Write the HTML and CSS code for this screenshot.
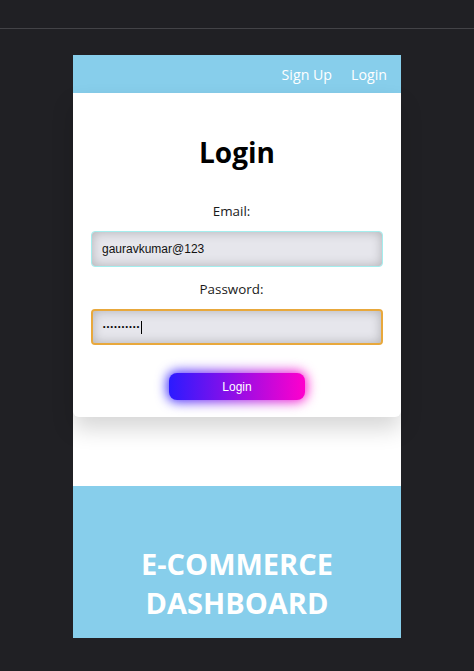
FILE: index.html
```html
<!DOCTYPE html>
<html lang="en">
<head>
<meta charset="utf-8">
<title>Login</title>
<link rel="stylesheet" href="styles.css">
</head>
<body>
<div class="topbar"></div>
<div class="panel">
  <nav class="nav">
    <a href="#" class="nav-link">Sign Up</a>
    <a href="#" class="nav-link">Login</a>
  </nav>
  <form class="card">
    <h1 class="title">Login</h1>
    <label class="label" for="email">Email:</label>
    <input id="email" class="field field-email" type="text" value="gauravkumar@123">
    <label class="label label-pass" for="pass">Password:</label>
    <div id="pass" class="field field-pass"><span class="dots">••••••••••</span><span class="caret"></span></div>
    <button type="button" class="btn">Login</button>
  </form>
  <div class="spacer"></div>
  <footer class="footer">
    <h2 class="footer-title">E-COMMERCE<br>DASHBOARD</h2>
  </footer>
</div>
</body>
</html>
```

FILE: styles.css
```css
* { box-sizing: border-box; }
html, body { margin: 0; padding: 0; }
body {
  background: #202024;
  min-height: 671px;
  font-family: "Open Sans", "Noto Sans", sans-serif;
}
.topbar {
  height: 29px;
  border-bottom: 1px solid #434347;
}
.panel {
  width: 328px;
  margin: 26px auto 0;
  background: #ffffff;
}
.nav {
  height: 38px;
  background: #87ceeb;
  display: flex;
  justify-content: flex-end;
  align-items: center;
  gap: 19px;
  padding-right: 14px;
}
.nav-link {
  color: #ffffff;
  text-decoration: none;
  font-size: 14.2px;
  line-height: 20px;
  padding-top: 2px;
}
.card {
  margin: 0;
  background: #ffffff;
  display: flex;
  flex-direction: column;
  align-items: center;
  padding: 40px 18px 17px;
  border-radius: 0 0 6px 6px;
  box-shadow: 0 12px 22px rgba(0, 0, 0, 0.16);
  position: relative;
  isolation: isolate;
}
.title {
  margin: 0;
  font-size: 28px;
  line-height: 38px;
  font-weight: 700;
  color: #000;
}
.label {
  margin-top: 30px;
  padding-right: 11px;
  font-size: 13.4px;
  line-height: 20px;
  color: #1a1a1a;
}
.label-pass { margin-top: 12px; }
.field {
  margin-top: 10px;
  width: 100%;
  height: 36px;
  border-radius: 4px;
  background: #e6e6ec;
  box-shadow: inset 0 0 11px rgba(0, 0, 0, 0.24);
  font-family: "Liberation Sans", Arial, sans-serif;
  font-size: 12px;
  color: #111;
  padding: 0 10px;
  outline: none;
}
.field-email {
  border: 1.5px solid #a4eeee;
}
.field-pass {
  border: 2px solid #e8a83c;
  display: flex;
  align-items: center;
}
.dots {
  font-size: 7px;
  font-weight: 700;
  letter-spacing: 1.3px;
  color: #000;
  line-height: 10px;
}
.caret {
  display: inline-block;
  width: 1.5px;
  height: 13px;
  background: #000;
}
.btn {
  margin-top: 28px;
  width: 136px;
  height: 27px;
  border: none;
  border-radius: 8px;
  background: linear-gradient(90deg, #2b1bff, #ff00cc);
  color: #fff;
  font-family: "Liberation Sans", Arial, sans-serif;
  font-size: 12px;
  position: relative;
}
.btn::before {
  content: "";
  position: absolute;
  inset: -2px;
  border-radius: 10px;
  background: linear-gradient(90deg, #3a30ff, #ff20d0);
  filter: blur(6px);
  z-index: -1;
}
.spacer { height: 69px; }
.footer {
  background: #87ceeb;
  height: 152px;
  padding-top: 58px;
  text-align: center;
}
.footer-title {
  margin: 0;
  color: #ffffff;
  font-size: 29px;
  line-height: 39px;
  font-weight: 700;
}
```
